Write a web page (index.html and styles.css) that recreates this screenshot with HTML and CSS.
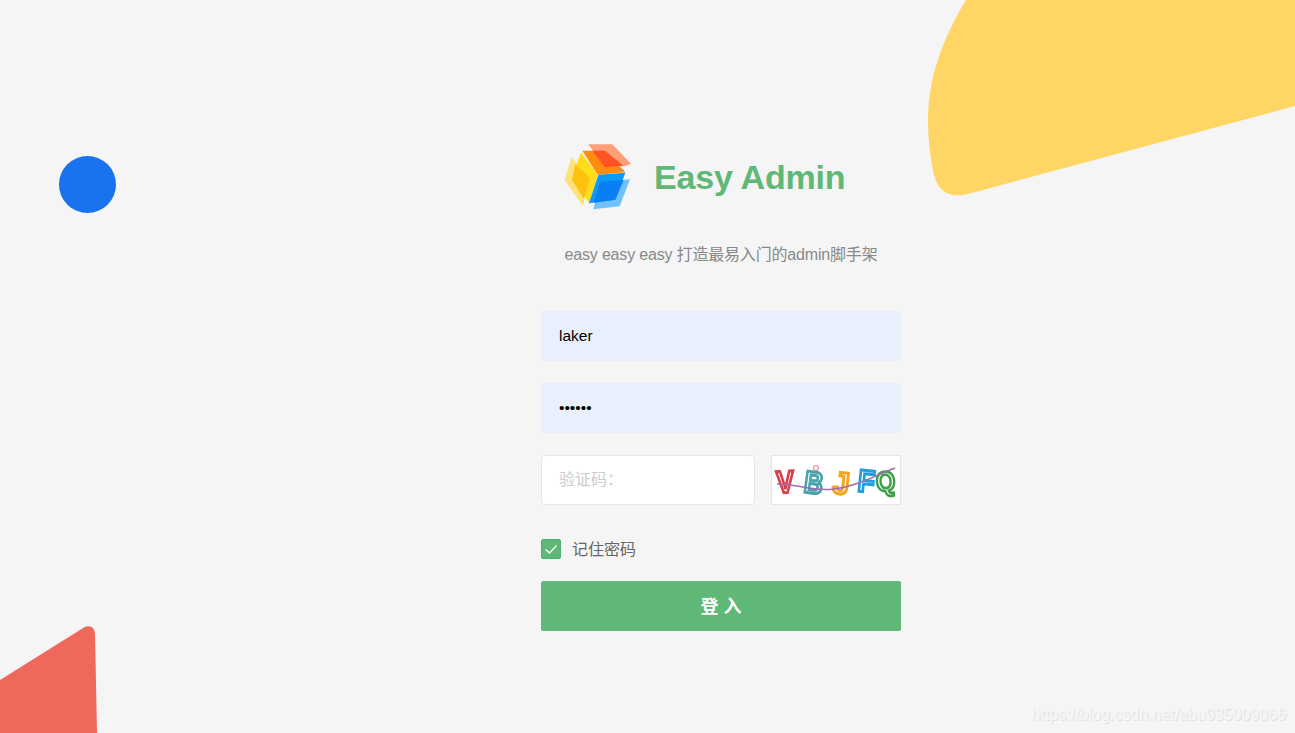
FILE: index.html
```html
<!DOCTYPE html>
<html lang="zh-CN">
<head>
<meta charset="utf-8">
<title>Easy Admin</title>
<link rel="stylesheet" href="styles.css">
</head>
<body>
<svg class="deco deco-yellow" width="367" height="200" viewBox="928 0 367 200"><path d="M966 0C945 35 928 75 928 120C928 140 931 165 935 178C939 192 950 198 968 194L1295 106V0Z"/></svg>
<div class="deco deco-blue"></div>
<svg class="deco deco-red" width="97" height="108" viewBox="0 625 97 108"><path d="M0 680L84 627.500C89 624.500 95 627 95 634L97 733H0Z"/></svg>

<main class="login">
  <div class="brand">
    <svg class="logo" width="85" height="85" viewBox="0 0 255 255">
      <path d="M100 28H172L228 86L212 93L150 96Z" class="pane-top"/>
      <path d="M50 66L104 130L84 213L28 136Z" class="pane-left"/>
      <path d="M136 140L225 133L194 214L115 223Z" class="pane-right"/>
      <path d="M82 47H150L211 112L128 119Z" class="face-top"/>
      <path d="M78 52L128 119L103 205L50 130Z" class="face-left"/>
      <path d="M130 119L211 113L181 194L102 205Z" class="face-right"/>
      <path d="M112 47H150L205 92L150 97Z" class="inner-top"/>
      <path d="M60 88L106 130L86 192L52 136Z" class="inner-left"/>
      <path d="M134 141L206 135L181 194L116 203Z" class="inner-right"/>
    </svg>
    <h1 class="title">Easy Admin</h1>
  </div>
  <p class="tagline">easy easy easy 打造最易入门的admin脚手架</p>
  <form class="form">
    <input class="field field-filled" type="text" value="laker">
    <input class="field field-filled" type="password" value="123456">
    <div class="captcha-row">
      <input class="field field-code" type="text" placeholder="验证码：">
      <div class="captcha">
        <svg width="128" height="48" viewBox="0 0 128 48">
          <text class="cl cl-red" transform="translate(5 37) rotate(-3) scale(.84 1)">V</text>
          <text class="cl cl-teal" transform="translate(31 36) rotate(8) scale(.84 1)">B</text>
          <text class="cl cl-orange" transform="translate(60 37) rotate(6) scale(.95 1)">J</text>
          <text class="cl cl-blue" transform="translate(85 35) rotate(6) scale(.88 1)">F</text>
          <text class="cl cl-green" transform="translate(105 36) rotate(-6) scale(.8 .9)">Q</text>
          <path class="cline" d="M5 28C28 28 40 36 62 33C85 30 105 19 123 12"/>
          <circle class="cdot" cx="44" cy="12" r="2.500"/>
        </svg>
      </div>
    </div>
    <label class="remember">
      <span class="check"><svg width="14" height="14" viewBox="0 0 14 14"><path d="M1.500 7.500L5.500 11L12.500 3.500"/></svg></span>
      <span class="remember-text">记住密码</span>
    </label>
    <button class="submit" type="button">登 入</button>
  </form>
</main>
<div class="watermark">https://blog.csdn.net/abu935009066</div>
</body>
</html>
```
FILE: styles.css
```css
* { box-sizing: border-box; }
html, body { height: 100%; }
body {
  margin: 0;
  height: 733px;
  overflow: hidden;
  background: #f5f5f5;
  font-family: "Liberation Sans", "Noto Sans CJK SC", sans-serif;
  color: #333;
}
.deco { position: absolute; display: block; }
.deco-yellow { top: 0; right: 0; fill: #ffd666; }
.deco-red { left: 0; bottom: 0; fill: #f0675b; }
.deco-blue {
  left: 58.500px;
  top: 156px;
  width: 57px;
  height: 57px;
  border-radius: 50%;
  background: #1a73ee;
}
.login {
  width: 360px;
  margin-left: 541px;
  padding-top: 135px;
}
.brand {
  display: flex;
  align-items: center;
  height: 85px;
  padding-left: 14px;
}
.logo { flex: none; filter: blur(.5px); }
.pane-top { fill: #ff9e78; }
.pane-left { fill: #ffe27c; }
.pane-right { fill: #70c2fb; }
.face-top { fill: #ff8c10; }
.face-left { fill: #ffdd1a; }
.face-right { fill: #0a9bf5; }
.inner-top { fill: #ff5325; }
.inner-left { fill: #ffc110; }
.inner-right { fill: #0a7ff5; }
.title {
  margin: 0 0 0 14px;
  font-size: 34px;
  letter-spacing: -.2px;
  font-weight: 700;
  color: #5fb878;
  line-height: 85px;
}
.tagline {
  margin: 25px 0 0;
  height: 20px;
  text-align: center;
  font-size: 16px;
  letter-spacing: -.18px;
  line-height: 20px;
  color: #888;
}
.form {
  display: flex;
  flex-direction: column;
  margin-top: 46px;
}
.field {
  display: block;
  height: 50px;
  padding: 0 17px;
  border: 1px solid #e6e6e6;
  border-radius: 4px;
  background: #fff;
  font: 15.500px "Liberation Sans", "Noto Sans CJK SC", sans-serif;
  color: #000;
  outline: none;
}
.field::placeholder { color: #ccc; opacity: 1; }
.field-filled {
  width: 100%;
  margin-bottom: 22px;
  background: #e8f0fe;
  border-color: #e8eefa;
}
.captcha-row {
  display: flex;
  justify-content: space-between;
}
.field-code { width: 214px; font-size: 16px; }
.captcha {
  width: 130px;
  height: 50px;
  border: 1px solid #e6e6e6;
  background: #fff;
}
.captcha svg { display: block; filter: blur(.35px); }
.cl {
  font: 700 31px "Liberation Sans", sans-serif;
  fill: #fff;
  stroke-width: 3;
}
.cl-red { stroke: #d6414b; }
.cl-teal { stroke: #4aa3ab; }
.cl-orange { stroke: #f7a21f; }
.cl-blue { stroke: #1f9fe0; }
.cl-green { stroke: #3fa04a; }
.cline { fill: none; stroke: #a06cb0; stroke-width: 1.600; }
.cdot { fill: #fff; stroke: #f08a90; stroke-width: 1.200; }
.remember {
  display: flex;
  align-items: center;
  height: 20px;
  margin-top: 34px;
}
.check {
  display: flex;
  align-items: center;
  justify-content: center;
  width: 20px;
  height: 20px;
  border: 1px solid #4fb070;
  border-radius: 2px;
  background: #5fb878;
}
.check path { fill: none; stroke: #fff; stroke-width: 1.300; }
.remember-text {
  margin-left: 11px;
  padding-bottom: 2px;
  font-size: 16px;
  color: #666;
}
.submit {
  height: 50px;
  margin-top: 22px;
  padding: 0 0 2px;
  border: 0;
  border-radius: 2px;
  background: #5fb878;
  color: #fff;
  font: 700 18px "Liberation Sans", "Noto Sans CJK SC", sans-serif;
}
.watermark {
  position: absolute;
  right: 9px;
  top: 705px;
  font-size: 16px;
  line-height: 20px;
  color: #f7f7f7;
  text-shadow: 1px 1px 1px #dcdcdc;
}
```
